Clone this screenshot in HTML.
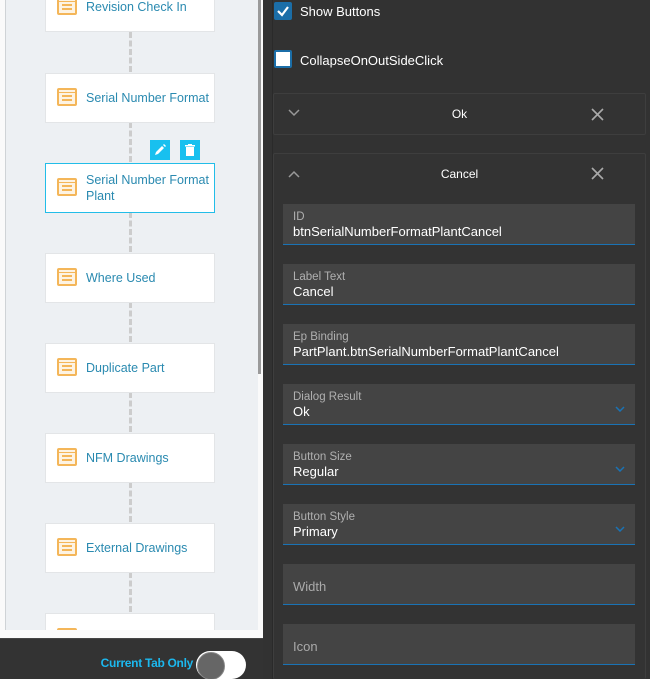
<!DOCTYPE html>
<html><head><meta charset="utf-8"><style>
*{box-sizing:border-box;margin:0;padding:0}
html,body{width:650px;height:679px;overflow:hidden}
body{background:#333;font-family:"Liberation Sans",sans-serif;position:relative}
.left{position:absolute;left:0;top:0;width:263px;height:638px;background:#fafafa}
.canvas{position:absolute;left:5px;top:0;width:253px;height:630px;background:#edf0f3;border-left:1px solid #cfd3d6;overflow:hidden}
.sb{position:absolute;left:258px;top:0;width:3px;height:374px;background:#9a9a9a}
.card{position:absolute;left:39px;width:170px;height:50px;background:#fff;border:1px solid #e3e5e7;color:#2a8ab0;font-size:12.5px;display:flex;align-items:center;padding-left:40px;line-height:16px}
.card.sel{border-color:#22bde8}
.ic{position:absolute;left:11px;top:50%;margin-top:-10px;width:20px;height:18px;border:2px solid #f4b659;border-radius:2px;background:#fdf3e3}
.ic:before{content:"";position:absolute;left:0;right:0;top:2px;height:1px;background:#f4b659}
.ic i{position:absolute;left:3px;right:3px;height:1.5px;background:#f4b659}
.dash{position:absolute;left:123px;width:3px;border-left:3px dashed #ccc}
.btn{position:absolute;width:20px;height:20px;background:#18c0ef}
.bottom{position:absolute;left:0;top:638px;width:263px;height:41px;background:#333;border-top:1px solid #444}
.ct{position:absolute;right:70px;top:17px;color:#1cb8ee;font-size:12px;font-weight:bold;letter-spacing:-.3px}
.tg{position:absolute;left:196px;top:12px;width:50px;height:28px;border-radius:14px;background:#fff}
.tg:before{content:"";position:absolute;left:1px;top:1px;width:26px;height:26px;border-radius:50%;background:#666;border:1px solid #888}
.right{position:absolute;left:263px;top:0;width:387px;height:679px;background:#323232}
.vl{position:absolute;left:272px;top:0;width:1px;height:679px;background:#2a2a2a}
.cb{position:absolute;left:274px;width:18px;height:18px;border:2px solid #1b6ea8;border-radius:2px}
.lbl{position:absolute;left:300px;color:#fff;font-size:13px}
.pan{position:absolute;left:273px;width:373px;border:1px solid #3e3e3e;background:#333;border-radius:2px}
.pt{position:absolute;left:0;right:0;text-align:center;color:#fff;font-size:12px}
.f{position:absolute;left:283px;width:352px;height:41px;background:#444;border-bottom:1.5px solid #1a73b5;padding-left:10px}
.f .l{color:#b0b0b0;font-size:11.5px;margin-top:7px}
.f .v{color:#fff;font-size:13px;margin-top:1px}
.f .p{color:#aaa;font-size:13px;margin-top:15px}
.f svg{position:absolute;right:10px;top:22px}
</style></head><body>
<div class="left">
<div class="canvas">
<div class="dash" style="top:32px;height:40px"></div>
<div class="dash" style="top:122px;height:40px"></div>
<div class="dash" style="top:212px;height:40px"></div>
<div class="dash" style="top:302px;height:40px"></div>
<div class="dash" style="top:392px;height:40px"></div>
<div class="dash" style="top:482px;height:40px"></div>
<div class="dash" style="top:572px;height:40px"></div>
<div class="card" style="top:-18px"><span class="ic"><i style="top:5px"></i><i style="top:9px"></i></span>Revision Check In</div>
<div class="card" style="top:73px"><span class="ic"><i style="top:5px"></i><i style="top:9px"></i></span>Serial Number Format</div>
<div class="card sel" style="top:163px"><span class="ic"><i style="top:5px"></i><i style="top:9px"></i></span>Serial Number Format<br>Plant</div>
<div class="card" style="top:253px"><span class="ic"><i style="top:5px"></i><i style="top:9px"></i></span>Where Used</div>
<div class="card" style="top:343px"><span class="ic"><i style="top:5px"></i><i style="top:9px"></i></span>Duplicate Part</div>
<div class="card" style="top:433px"><span class="ic"><i style="top:5px"></i><i style="top:9px"></i></span>NFM Drawings</div>
<div class="card" style="top:523px"><span class="ic"><i style="top:5px"></i><i style="top:9px"></i></span>External Drawings</div>
<div class="card" style="top:613px"><span class="ic"></span></div>
<div class="btn" style="left:144px;top:140px"><svg width="20" height="20"><path d="M5 15 L6 12 L12 6 L14 8 L8 14 Z M13 5 L14 4 L16 6 L15 7 Z" fill="#fff"/></svg></div>
<div class="btn" style="left:174px;top:140px"><svg width="20" height="20"><rect x="6" y="7" width="8" height="9" fill="#fff"/><rect x="5" y="5" width="10" height="1.5" fill="#fff"/><rect x="8" y="4" width="4" height="1.5" fill="#fff"/></svg></div>
</div>
<div class="sb"></div>
</div>
<div class="bottom"><span class="ct">Current Tab Only</span><div class="tg"></div></div>
<div class="right"></div>
<div class="vl"></div>
<div class="cb" style="top:2px;background:#1b6ea8"><svg width="14" height="14"><path d="M2 7 L6 11 L12 3" stroke="#fff" stroke-width="2.2" fill="none"/></svg></div>
<div class="lbl" style="top:4px">Show Buttons</div>
<div class="cb" style="top:50px;background:#fff"></div>
<div class="lbl" style="top:53px">CollapseOnOutSideClick</div>
<div class="pan" style="top:93px;height:42px">
<svg style="position:absolute;left:14px;top:15px" width="12" height="8"><path d="M1 1 L6 6 L11 1" stroke="#999" stroke-width="1.5" fill="none"/></svg>
<div class="pt" style="top:13px">Ok</div>
<svg style="position:absolute;left:317px;top:14px" width="13" height="13"><path d="M1 1 L12 12 M12 1 L1 12" stroke="#aaa" stroke-width="1.6"/></svg>
</div>
<div class="pan" style="top:153px;height:526px;border-bottom:none">
<svg style="position:absolute;left:14px;top:16px" width="12" height="8"><path d="M1 7 L6 2 L11 7" stroke="#999" stroke-width="1.5" fill="none"/></svg>
<div class="pt" style="top:13px">Cancel</div>
<svg style="position:absolute;left:317px;top:13px" width="13" height="13"><path d="M1 1 L12 12 M12 1 L1 12" stroke="#aaa" stroke-width="1.6"/></svg>
</div>
<div class="f" style="top:204px"><div class="l">ID</div><div class="v">btnSerialNumberFormatPlantCancel</div></div>
<div class="f" style="top:264px"><div class="l">Label Text</div><div class="v">Cancel</div></div>
<div class="f" style="top:324px"><div class="l">Ep Binding</div><div class="v">PartPlant.btnSerialNumberFormatPlantCancel</div></div>
<div class="f" style="top:384px"><div class="l">Dialog Result</div><div class="v">Ok</div><svg width="10" height="6"><path d="M1 1 L5 5 L9 1" stroke="#1a73b5" stroke-width="1.5" fill="none"/></svg></div>
<div class="f" style="top:444px"><div class="l">Button Size</div><div class="v">Regular</div><svg width="10" height="6"><path d="M1 1 L5 5 L9 1" stroke="#1a73b5" stroke-width="1.5" fill="none"/></svg></div>
<div class="f" style="top:504px"><div class="l">Button Style</div><div class="v">Primary</div><svg width="10" height="6"><path d="M1 1 L5 5 L9 1" stroke="#1a73b5" stroke-width="1.5" fill="none"/></svg></div>
<div class="f" style="top:564px"><div class="p">Width</div></div>
<div class="f" style="top:624px"><div class="p">Icon</div></div>
</body></html>
